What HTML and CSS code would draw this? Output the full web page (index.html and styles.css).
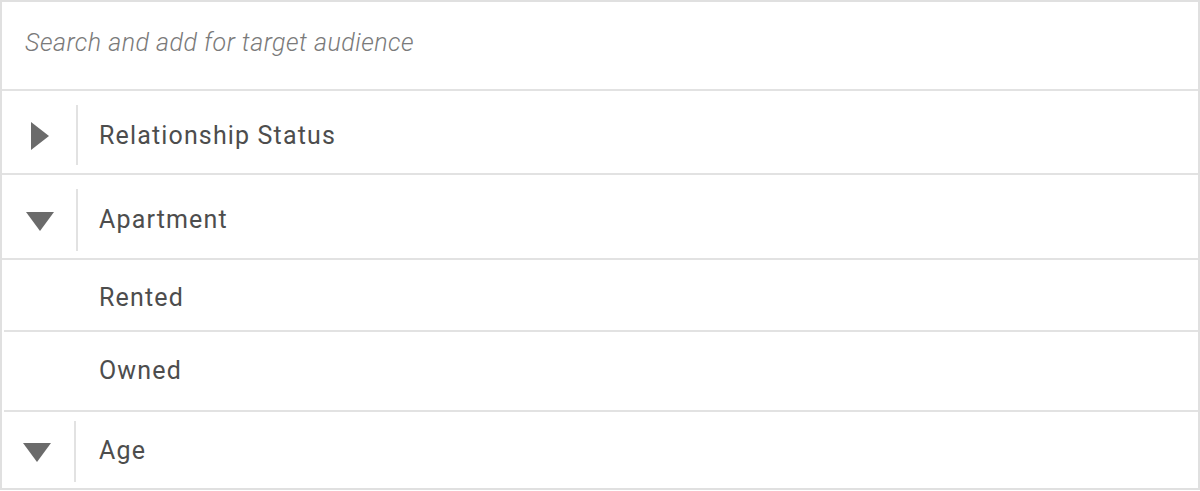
FILE: index.html
```html
<!DOCTYPE html>
<html lang="en">
  <head>
    <meta charset="UTF-8" />
    <meta name="viewport" content="width=device-width, initial-scale=1.0" />
    <title>Target audience</title>
    <link rel="stylesheet" href="styles.css">
  </head>
  <body>
    <div class="audience">
      <div class="search">Search and add for target audience</div>

      <div class="group group-status">
        <span class="toggle">
          <svg width="20" height="30" viewBox="0 0 20 30"><polygon points="1,1 19,15 1,29" fill="#6b6b6b"/></svg>
        </span>
        <span class="label">Relationship Status</span>
      </div>

      <div class="group group-apartment">
        <span class="toggle">
          <svg width="30" height="20" viewBox="0 0 30 20"><polygon points="1,1 29,1 15,20" fill="#6b6b6b"/></svg>
        </span>
        <span class="label">Apartment</span>
      </div>
      <div class="option option-rented">Rented</div>
      <div class="option option-owned">Owned</div>

      <div class="group group-age">
        <span class="toggle">
          <svg width="30" height="20" viewBox="0 0 30 20"><polygon points="1,1 29,1 15,20" fill="#6b6b6b"/></svg>
        </span>
        <span class="label">Age</span>
      </div>
    </div>
  </body>
</html>
```

FILE: styles.css
```css
body{
  margin: 0;
  background-color: white;
  font-family: Roboto, "Liberation Sans", Arial, sans-serif;
  color: #4d4d4d;
}
.audience{
  border: 2px solid #e0e0e0;
}
.search{
  height: 89px;
  box-sizing: border-box;
  padding: 0 0 6px 23px;
  border-bottom: 2px solid #e2e2e2;
  display: flex;
  align-items: center;
  font-size: 25px;
  letter-spacing: 0.5px;
  font-style: italic;
  font-weight: 300;
  color: #7a7a7a;
}
.group{
  display: flex;
  align-items: center;
  border-bottom: 2px solid #e2e2e2;
}
.toggle{
  align-self: flex-start;
  width: 74px;
  border-right: 2px solid #e2e2e2;
}
.toggle svg{
  display: block;
}
.label{
  font-size: 25px;
  letter-spacing: 1.15px;
  padding: 6px 0 0 21px;
}

/* relationship status */
.group-status{
  height: 82px;
}
.group-status .toggle{
  margin-top: 14px;
  height: 60px;
}
.group-status svg{
  margin: 16px 0 0 28px;
}

/* apartment */
.group-apartment{
  height: 83px;
}
.group-apartment .toggle{
  margin-top: 14px;
  height: 62px;
}
.group-apartment svg{
  margin: 22px 0 0 23px;
}

/* age */
.group-age{
  height: 76px;
  border-bottom: none;
}
.group-age .toggle{
  width: 72px;
  margin-top: 9px;
  height: 61px;
}
.group-age svg{
  margin: 21px 0 0 20px;
}
.group-age .label{
  padding: 0 0 0 23px;
}

.option{
  display: flex;
  align-items: center;
  box-sizing: border-box;
  margin-left: 2px;
  padding-left: 95px;
  font-size: 25px;
  letter-spacing: 1.15px;
  border-bottom: 2px solid #e2e2e2;
}
.option-rented{
  height: 72px;
  padding-top: 4px;
}
.option-owned{
  height: 80px;
  padding-bottom: 2px;
}
```
